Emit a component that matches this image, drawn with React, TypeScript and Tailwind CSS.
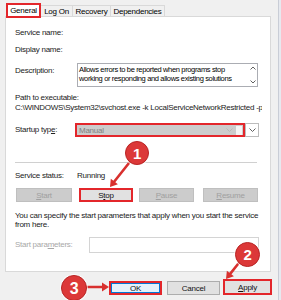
import React from "react";

const Btn = ({
  children,
  className = "",
}: {
  children: React.ReactNode;
  className?: string;
}) => (
  <div className={`flex items-center justify-center ${className}`}>{children}</div>
);

function Arrow({ x1, y1, x2, y2 }: { x1: number; y1: number; x2: number; y2: number }) {
  const dx = x2 - x1;
  const dy = y2 - y1;
  const len = Math.sqrt(dx * dx + dy * dy);
  const ux = dx / len;
  const uy = dy / len;
  const hl = 7;
  const hw = 4.5;
  const bx = x2 - ux * hl;
  const by = y2 - uy * hl;
  const p1 = `${bx - uy * hw},${by + ux * hw}`;
  const p2 = `${bx + uy * hw},${by - ux * hw}`;
  return (
    <g>
      <line x1={x1} y1={y1} x2={bx + ux} y2={by + uy} stroke="#d8302e" strokeWidth={2.6} strokeLinecap="round" />
      <polygon points={`${x2},${y2} ${p1} ${p2}`} fill="#d8302e" />
    </g>
  );
}

const Badge = ({ n, className }: { n: string; className: string }) => (
  <div
    className={`absolute flex items-center justify-center rounded-full bg-[#dc3838] border border-[#b82424] text-white font-bold font-['Liberation_Sans',Arial,sans-serif] shadow-[0_0_0_1px_rgba(255,255,255,0.6)] ${className}`}
  >
    {n}
  </div>
);

export default function App() {
  return (
    <div className="relative w-[281px] h-[300px] overflow-hidden bg-[#f0f0f0] font-['Liberation_Sans',Arial,sans-serif] text-[8px] leading-[9px] text-black tracking-[-0.25px]">
      <div className="flex h-full">
        <div className="w-[278px] flex flex-col">
          {/* Tabs */}
          <div className="h-[16px] pl-[6px] pt-[3px] flex items-start">
            <div className="relative z-10 w-[35px] h-[15px] border-2 border-[#e3262b] bg-white flex items-center justify-center">
              General
            </div>
            <div className="mt-[2px] w-[32px] h-[12px] border border-b-0 border-l-0 border-[#d9d9d9] bg-[#f0f0f0] flex items-center justify-center">
              Log On
            </div>
            <div className="mt-[2px] w-[38px] h-[12px] border border-b-0 border-l-0 border-[#d9d9d9] bg-[#f0f0f0] flex items-center justify-center">
              Recovery
            </div>
            <div className="mt-[2px] w-[54px] h-[12px] border border-b-0 border-l-0 border-[#d9d9d9] bg-[#f0f0f0] flex items-center justify-center">
              Dependencies
            </div>
          </div>

          {/* Panel */}
          <div className="ml-[5px] w-[266px] h-[256px] border border-[#d9d9d9] bg-white pl-[9px] pr-[8px] flex flex-col">
            <div className="h-[11px]" />
            <div className="h-[10px] leading-[10px] text-[#222]">Service name:</div>
            <div className="h-[7px]" />
            <div className="h-[10px] leading-[10px] text-[#222]">Display name:</div>
            <div className="h-[8px]" />
            <div className="h-[24px] flex">
              <div className="w-[62px] pt-[3px] leading-[10px] text-[#222]">Description:</div>
              <div className="w-[181px] h-[24px] border border-[#abadb3] flex">
                <div className="flex-1 pl-[1px] pt-[1px] leading-[9px] text-[7.5px] tracking-[-0.35px]">
                  Allows errors to be reported when programs stop working or responding and allows existing solutions
                </div>
                <div className="w-[9px] flex flex-col items-center justify-between py-[2px] text-[#606060]">
                  <svg width="6" height="4" viewBox="0 0 6 4"><path d="M0.5 3.5 L3 1 L5.5 3.5" stroke="#606060" fill="none" strokeWidth="1" /></svg>
                  <svg width="6" height="4" viewBox="0 0 6 4"><path d="M0.5 0.5 L3 3 L5.5 0.5" stroke="#606060" fill="none" strokeWidth="1" /></svg>
                </div>
              </div>
            </div>
            <div className="h-[6px]" />
            <div className="h-[10px] leading-[10px] text-[#222]">Path to executable:</div>
            <div className="h-[10px] leading-[10px] whitespace-nowrap overflow-hidden text-[#222]">
              C:\WINDOWS\System32\svchost.exe -k LocalServiceNetworkRestricted -p
            </div>
            <div className="h-[10px]" />
            <div className="h-[14px] flex items-center">
              <div className="w-[60px] leading-[10px] text-[#222]">
                Startup typ<span className="underline">e</span>:
              </div>
              <div className="w-[170px] h-[14px] border-2 border-[#e3262b] bg-[#cccccc] flex items-center pl-[2px] text-[#808080]">
                <span className="flex-1">Manual</span>
                <svg width="7" height="4" viewBox="0 0 7 4" className="mr-[3px]"><path d="M0.5 0.5 L3.5 3.5 L6.5 0.5" stroke="#b8b8b8" fill="none" strokeWidth="1" /></svg>
                <div className="w-[6px] h-[9px] bg-[#f4f4f4] mr-[1px]" />
              </div>
              <div className="w-[14px] h-[14px] border border-[#bcbcbc] bg-white flex items-center justify-center">
                <svg width="7" height="4" viewBox="0 0 7 4"><path d="M0.5 0.5 L3.5 3.5 L6.5 0.5" stroke="#606060" fill="none" strokeWidth="1" /></svg>
              </div>
            </div>
            <div className="h-[25px]" />
            <div className="h-[1px] w-[242px] bg-[#d0d0d0]" />
            <div className="h-[8px]" />
            <div className="h-[10px] leading-[10px] flex text-[#222]">
              <div className="w-[62px]">Service status:</div>
              <div>Running</div>
            </div>
            <div className="h-[7px]" />
            <div className="h-[14px] flex">
              <Btn className="ml-[1px] w-[56px] h-[14px] bg-[#cccccc] border border-[#bfbfbf] text-[#a0a0a0]">
                <span className="underline">S</span>tart
              </Btn>
              <Btn className="ml-[7px] w-[54px] h-[14px] bg-[#e1e1e1] border-2 border-[#e3262b] text-[#111]">
                S<span className="underline">t</span>op
              </Btn>
              <Btn className="ml-[6px] w-[55px] h-[14px] bg-[#cccccc] border border-[#bfbfbf] text-[#a0a0a0]">
                <span className="underline">P</span>ause
              </Btn>
              <Btn className="ml-[9px] w-[55px] h-[14px] bg-[#cccccc] border border-[#bfbfbf] text-[#a0a0a0]">
                <span className="underline">R</span>esume
              </Btn>
            </div>
            <div className="h-[10px]" />
            <div className="h-[18px] leading-[8.5px] w-[248px] text-[#222]">
              You can specify the start parameters that apply when you start the service from here.
            </div>
            <div className="h-[7px]" />
            <div className="h-[16px] flex items-center">
              <div className="w-[74px] text-[#a8a8a8] leading-[10px]">
                Start para<span className="underline">m</span>eters:
              </div>
              <div className="w-[170px] h-[16px] border border-[#d4d4d4] bg-white" />
            </div>
          </div>

          {/* Bottom buttons */}
          <div className="h-[7px]" />
          <div className="h-[16px] flex items-start">
            <div className="ml-[109px] mt-[2px] w-[53px] h-[14px] border-2 border-[#e3262b]">
              <div className="w-full h-full bg-[#e5f1fb] border border-[#0078d7] flex items-center justify-center text-[#111]">
                OK
              </div>
            </div>
            <Btn className="ml-[5px] mt-[2px] w-[53px] h-[14px] bg-[#e1e1e1] border border-[#adadad] text-[#111]">
              Cancel
            </Btn>
            <div className="ml-[3px] w-[49px] h-[16px] border-2 border-[#e3262b] bg-[#e1e1e1] flex items-center justify-center text-[#111]">
              <span>
                <span className="underline">A</span>pply
              </span>
            </div>
          </div>
        </div>
        <div className="w-[3px] h-full bg-[#e6e9ef] border-l border-[#c9cdd6]" />
      </div>

      {/* Annotation overlay */}
      <svg className="absolute left-0 top-0 pointer-events-none" width="281" height="300" viewBox="0 0 281 300">
        <Arrow x1={129} y1={163} x2={110} y2={187} />
        <Arrow x1={238} y1={264} x2={226} y2={279} />
        <Arrow x1={87} y1={287} x2={109} y2={287} />
      </svg>
      <Badge n="1" className="left-[125px] top-[141px] w-[24px] h-[24px] text-[15px]" />
      <Badge n="2" className="left-[235px] top-[242px] w-[25px] h-[25px] text-[15px]" />
      <Badge n="3" className="left-[61px] top-[275px] w-[26px] h-[26px] text-[16px]" />
    </div>
  );
}
